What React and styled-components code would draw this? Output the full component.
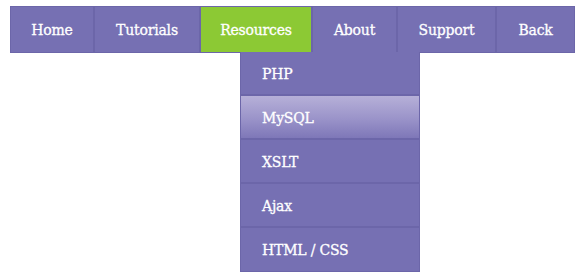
import React from 'react'
import styled, { createGlobalStyle } from 'styled-components'

const links = [
    { label: 'Home', width: 84 },
    { label: 'Tutorials', width: 106 },
    { label: 'Resources', width: 112, active: true },
    { label: 'About', width: 85 },
    { label: 'Support', width: 99 },
    { label: 'Back', width: 77 }
]

const subLinks = ['PHP', 'MySQL', 'XSLT', 'Ajax', 'HTML / CSS']

const App = () => {
    return(
        <>
            <GlobalStyle />
            <Page>
                <Menu>
                    {links.map(link => (
                        <Item key={link.label} $width={link.width} $active={link.active}>
                            <Link>{link.label}</Link>
                            {link.active &&
                                <Dropdown>
                                    {subLinks.map(sub => (
                                        <SubItem key={sub} $hover={sub === 'MySQL'}>{sub}</SubItem>
                                    ))}
                                </Dropdown>
                            }
                        </Item>
                    ))}
                </Menu>
            </Page>
        </>
    )
}

export default App

const GlobalStyle = createGlobalStyle`
    html, body {
        margin: 0;
        background: #ffffff;
        font-family: 'DejaVu Serif', Georgia, serif;
    }
`
const Page = styled.div`
    min-height: 276px;
    padding: 6px 0 0 10px;
    box-sizing: border-box;
`
const Menu = styled.ul`
    display: flex;
    list-style: none;
    margin: 0;
    padding: 0;
    width: max-content;
    border: 1px solid #6c66a9;
    background-color: #7670b3;
`
const Item = styled.li`
    position: relative;
    width: ${p => p.$width}px;
    height: 45px;
    box-sizing: border-box;
    border-right: 2px solid #6c66a9;
    background-color: ${p => p.$active ? '#8cc934' : '#7670b3'};

    &:last-child {
        border-right: none;
    }
`
const Link = styled.a`
    display: flex;
    align-items: center;
    justify-content: center;
    height: 100%;
    padding-top: 1px;
    box-sizing: border-box;
    color: #ffffff;
    font-size: 14px;
    letter-spacing: -0.2px;
    -webkit-text-stroke: 0.3px #ffffff;
    cursor: pointer;
`
const Dropdown = styled.ul`
    position: absolute;
    z-index: 10;
    top: 45px;
    left: 39px;
    width: 180px;
    margin: 0;
    padding: 0;
    list-style: none;
    background-color: #7670b3;
    border: 1px solid #6c66a9;
    border-top: none;
    box-sizing: border-box;
`
const SubItem = styled.li`
    height: 44px;
    line-height: 44px;
    padding-left: 21px;
    box-sizing: border-box;
    color: #ffffff;
    font-size: 14px;
    letter-spacing: -0.2px;
    -webkit-text-stroke: 0.3px #ffffff;
    border-bottom: 2px solid #6c66a9;
    background: ${p => p.$hover
        ? 'linear-gradient(to bottom, #b6b0d8 0%, #9a93c9 55%, #7e77b8 100%)'
        : '#7670b3'};

    &:last-child {
        border-bottom: none;
        height: 43px;
    }
`
